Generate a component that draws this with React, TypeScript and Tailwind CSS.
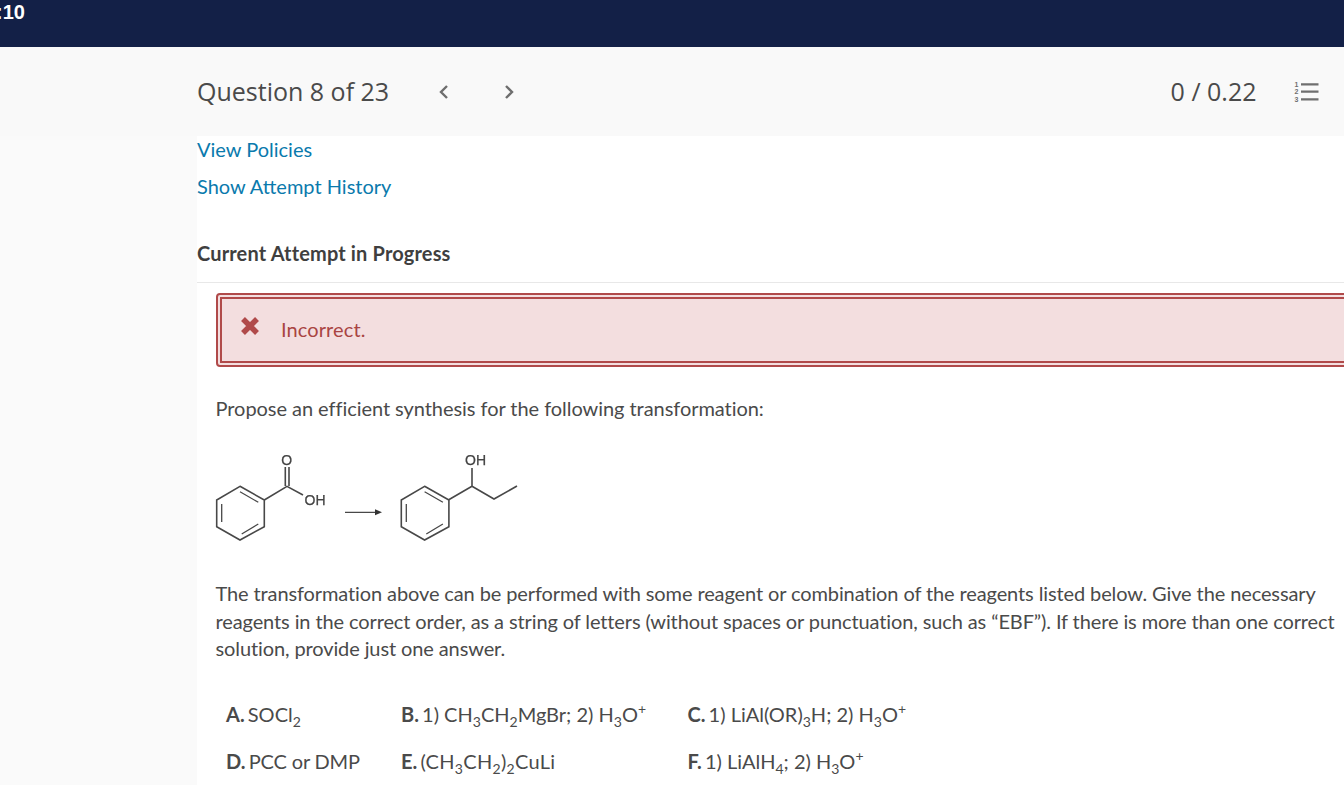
import React from 'react';

const lato = "font-['Lato','Noto_Sans',sans-serif]";

const Benzene = ({ x }: { x: number }) => (
  <g transform={`translate(${x} 0)`} fill="none" stroke="#484848" strokeWidth="1.6">
    <path d="M23.3 42.3 47.6 56v26.7L23.3 96 0 82.7V56z" />
    <path d="M23.3 47.7 41.6 58.3M25 90 41.6 80M5 60v18" strokeWidth="1.3" />
  </g>
);

const Molecules = () => (
  <svg width="330" height="105" viewBox="0 0 330 105" className="block blur-[0.4px]">
    <Benzene x={11.7} />
    <g fill="none" stroke="#484848" strokeWidth="1.6">
      <path d="M59.3 56 82 42.3 98 51M80.3 42V23M84 42V23" />
      <path d="M140 68.3h34" strokeWidth="1.3" />
      <path d="M243.3 56 267 42.3V24M267 42.3 289 55 312 42" />
    </g>
    <path d="M170 65.3l7 3-7 3z" fill="#333" />
    <Benzene x={196.3} />
    <g fill="#444" stroke="#444" strokeWidth="0.25" fontSize="14" fontFamily="'Liberation Sans', sans-serif">
      <text x="76.3" y="21">O</text>
      <text x="99.5" y="61">OH</text>
      <text x="260" y="21">OH</text>
    </g>
  </svg>
);

const ListIcon = () => (
  <svg width="26" height="22" viewBox="0 0 26 22" className="text-[#6f6f6f]">
    <path d="M7 3.3h17.5M7 10.7h17.5M7 18.3h17.5" stroke="currentColor" strokeWidth="2.2" fill="none" />
    <g fill="currentColor" fontSize="7" fontWeight="700" fontFamily="'Liberation Sans', sans-serif">
      <text x="0.5" y="5.8">1</text>
      <text x="0.5" y="13">2</text>
      <text x="0.5" y="21">3</text>
    </g>
  </svg>
);

const Sub = ({ children }: { children: React.ReactNode }) => (
  <sub className="align-baseline relative top-[5px] text-[14px] leading-none">{children}</sub>
);
const Sup = ({ children }: { children: React.ReactNode }) => (
  <sup className="align-baseline relative top-[-8px] text-[14px] leading-none">{children}</sup>
);

const Reagent = ({ letter, children }: { letter: string; children: React.ReactNode }) => (
  <div className="whitespace-nowrap">
    <span className="mr-[-2px] font-bold">{letter}.</span> {children}
  </div>
);

export default function App() {
  return (
    <div className={`h-[785px] w-[1344px] overflow-hidden bg-[#fafafa] ${lato} text-[20px] text-[#4a4a4a]`}>
      <div className="flex h-[47px] items-start bg-[#132047]">
        <div className="ml-[-4px] font-['Liberation_Sans',sans-serif] text-[20px] font-bold leading-[24px] text-white">:10</div>
      </div>

      <div className="flex h-[89px] items-center bg-[#f9f9f9] pl-[197px] pr-[24px]">
        <div className="font-['Open_Sans',sans-serif] text-[25px] text-[#4a4a4a]">Question 8 of 23</div>
        <svg width="12" height="16" viewBox="0 0 12 16" className="ml-[49px] text-[#6e6e6e]">
          <path d="M9 2 3 8l6 6" fill="none" stroke="currentColor" strokeWidth="2.4" />
        </svg>
        <svg width="12" height="16" viewBox="0 0 12 16" className="ml-[53px] text-[#6e6e6e]">
          <path d="M3 2l6 6-6 6" fill="none" stroke="currentColor" strokeWidth="2.4" />
        </svg>
        <div className="ml-auto font-['Open_Sans',sans-serif] text-[25px] text-[#4a4a4a]">0 / 0.22</div>
        <div className="ml-[37.5px]">
          <ListIcon />
        </div>
      </div>

      <div className="ml-[197px] h-[649px] bg-white">
        <div className="text-[#0a7aad]">
          <div className="h-[37px] leading-[27px]">View Policies</div>
          <div className="h-[37px] leading-[27px]">Show Attempt History</div>
        </div>
        <div className="mt-[30px] border-b border-[#e8e8e8] pb-[15px] font-bold leading-[27px] tracking-[0.15px] text-[#3f3f3f]">
          Current Attempt in Progress
        </div>

        <div className="ml-[19px] mt-[10px] flex h-[74px] w-[1200px] items-center rounded-[4px] border-[2px] border-[#b04a4a] bg-[#f3dedf] p-[2px]">
          <div className="flex h-full w-full items-center border-[2px] border-[#b04a4a] pb-[3px] pl-[18px] text-[#a94442]">
            <svg width="20" height="20" viewBox="0 0 20 20" className="mb-[5px] text-[#b04a4a]">
              <path d="M3 3l14 14M17 3 3 17" stroke="currentColor" strokeWidth="5.5" fill="none" />
            </svg>
            <span className="ml-[21px] tracking-[0.1px]">Incorrect.</span>
          </div>
        </div>

        <div className="ml-[18.5px] mt-[28px] leading-[27px] tracking-[-0.05px]">Propose an efficient synthesis for the following transformation:</div>

        <div className="ml-[8px] mt-[22px]">
          <Molecules />
        </div>

        <div className="ml-[18.5px] mt-[31px] w-[1125px] leading-[27.5px] tracking-[-0.11px]">
          The transformation above can be performed with some reagent or combination of the reagents listed below. Give the necessary reagents in the correct order, as a string of letters (without spaces or punctuation, such as “EBF”). If there is more than one correct solution, provide just one answer.
        </div>

        <div className="ml-[29px] mt-[38px] grid grid-cols-[175px_286.5px_1fr] gap-y-[20px] leading-[27px]">
          <Reagent letter="A">SOCl<Sub>2</Sub></Reagent>
          <Reagent letter="B">1) CH<Sub>3</Sub>CH<Sub>2</Sub>MgBr; 2) H<Sub>3</Sub>O<Sup>+</Sup></Reagent>
          <Reagent letter="C">1) LiAl(OR)<Sub>3</Sub>H; 2) H<Sub>3</Sub>O<Sup>+</Sup></Reagent>
          <Reagent letter="D"><span className="tracking-[-0.15px]">PCC or DMP</span></Reagent>
          <Reagent letter="E"><span className="tracking-[0.3px]">(CH<Sub>3</Sub>CH<Sub>2</Sub>)<Sub>2</Sub>CuLi</span></Reagent>
          <Reagent letter="F">1) LiAlH<Sub>4</Sub>; 2) H<Sub>3</Sub>O<Sup>+</Sup></Reagent>
        </div>
      </div>
    </div>
  );
}
